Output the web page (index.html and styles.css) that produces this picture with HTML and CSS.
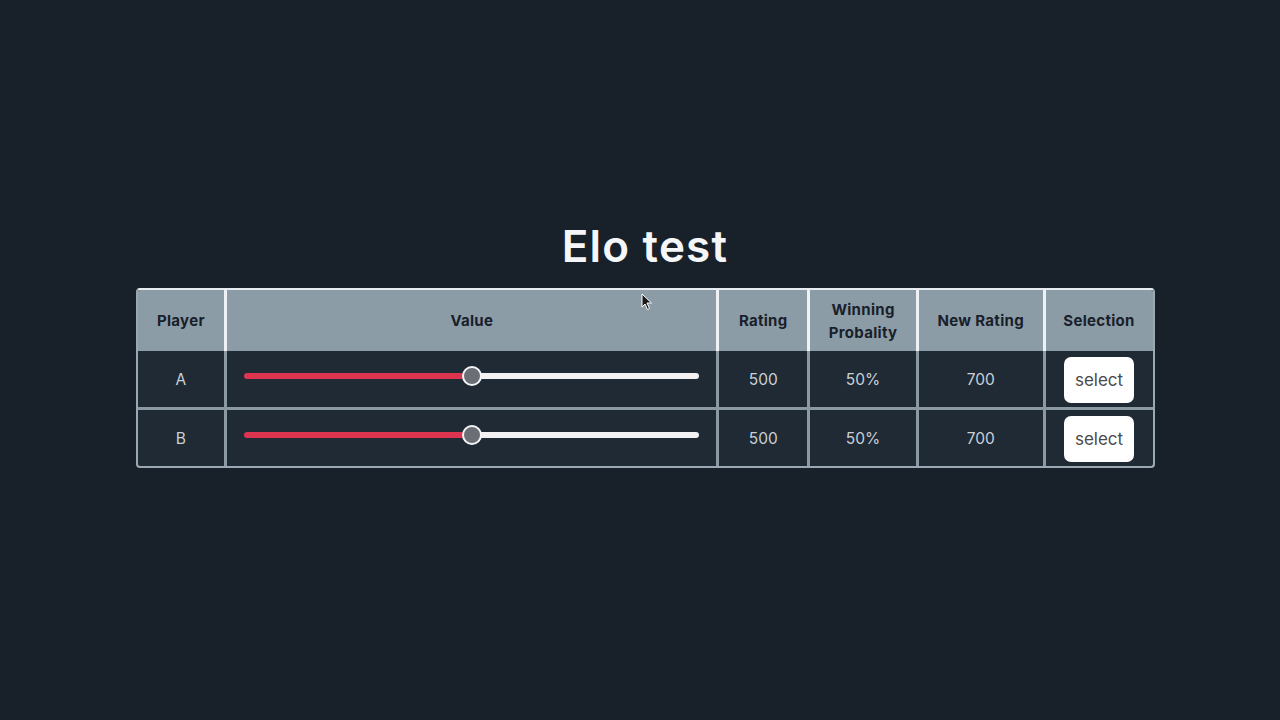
FILE: index.html
```html
<!DOCTYPE html>
<html lang="en">
<head>
  <meta charset="UTF-8" />
  <meta name="viewport" content="width=device-width, initial-scale=1.0" />
  <title>Elo test</title>
  <link rel="stylesheet" href="styles.css">
</head>
<body>
  <main class="page">
    <h1>Elo test</h1>
    <table class="elo">
      <thead>
        <tr>
          <th class="col-player">Player</th>
          <th class="col-value">Value</th>
          <th class="col-rating">Rating</th>
          <th class="col-prob">Winning<br>Probality</th>
          <th class="col-new">New Rating</th>
          <th class="col-sel">Selection</th>
        </tr>
      </thead>
      <tbody>
        <tr>
          <td>A</td>
          <td class="value-cell"><input type="range" class="slider" min="0" max="1000" value="500" /></td>
          <td>500</td>
          <td>50%</td>
          <td>700</td>
          <td><button class="select-btn">select</button></td>
        </tr>
        <tr>
          <td>B</td>
          <td class="value-cell"><input type="range" class="slider" min="0" max="1000" value="500" /></td>
          <td>500</td>
          <td>50%</td>
          <td>700</td>
          <td><button class="select-btn">select</button></td>
        </tr>
      </tbody>
    </table>
  </main>

  <svg class="cursor" width="12" height="18" viewBox="0 0 12 18">
    <path d="M1 1 L1 14 L4 11 L6.5 16.5 L8.5 15.5 L6 10 L10.5 10 Z" fill="#1a1a1a" stroke="#fff" stroke-width="1"/>
  </svg>
</body>
</html>
```

FILE: styles.css
```css
body {
  margin: 0;
  padding: 0;
  background-color: #18202a;
  font-family: Inter, "Open Sans", sans-serif;
  color: #fff;
  height: 720px;
  overflow: hidden;
}

.page {
  display: flex;
  flex-direction: column;
  align-items: center;
  padding-top: 218px;
  padding-left: 10px;
}

h1 {
  margin: 0 0 14px 0;
  font-size: 44px;
  font-weight: 600;
  line-height: 56px;
  color: #f4f6f8;
  letter-spacing: 1.2px;
}

.elo {
  border-collapse: separate;
  border-spacing: 0;
  width: 1019px;
  border: 2px solid #9aa8b2;
  border-top-color: #e6ecf0;
  border-radius: 4px;
  background-color: #1f2a35;
  overflow: hidden;
}

.elo th {
  background-color: #8c9ca7;
  color: #18202a;
  font-size: 15px;
  font-weight: 700;
  line-height: 23px;
  letter-spacing: 0.3px;
  height: 61px;
  padding: 0;
  border-left: 3px solid #eef2f5;
  text-align: center;
}

.elo th:first-child,
.elo td:first-child {
  border-left: none;
}

.elo td {
  color: #c9d1d8;
  font-size: 15.5px;
  height: 56px;
  padding: 0;
  text-align: center;
  border-left: 3px solid #8b99a4;
  border-top: 3px solid #8b99a4;
}

.elo tbody tr:first-child td {
  border-top: none;
}

.col-player { width: 87px; }
.col-value { width: 489px; }
.col-rating { width: 88px; }
.col-prob { width: 106px; }
.col-new { width: 124px; }
.col-sel { width: 107px; }

.value-cell {
  padding: 0 17px !important;
}

.slider {
  -webkit-appearance: none;
  appearance: none;
  width: 455px;
  height: 6px;
  margin: 0 0 6px 0;
  display: block;
  border-radius: 3px;
  background: linear-gradient(to right, #dd3550 50%, #f2f2f4 50%);
  outline: none;
}

.slider::-webkit-slider-thumb {
  -webkit-appearance: none;
  appearance: none;
  width: 20px;
  height: 20px;
  border-radius: 50%;
  background-color: #6c6e76;
  border: 2px solid #f4f4f6;
  box-sizing: border-box;
}

.select-btn {
  background-color: #fff;
  color: #4a4a4a;
  border: none;
  border-radius: 7px;
  width: 70px;
  height: 46px;
  font-family: inherit;
  font-size: 17px;
  cursor: pointer;
  margin-top: 2px;
}

.cursor {
  position: absolute;
  left: 641px;
  top: 293px;
}
```
